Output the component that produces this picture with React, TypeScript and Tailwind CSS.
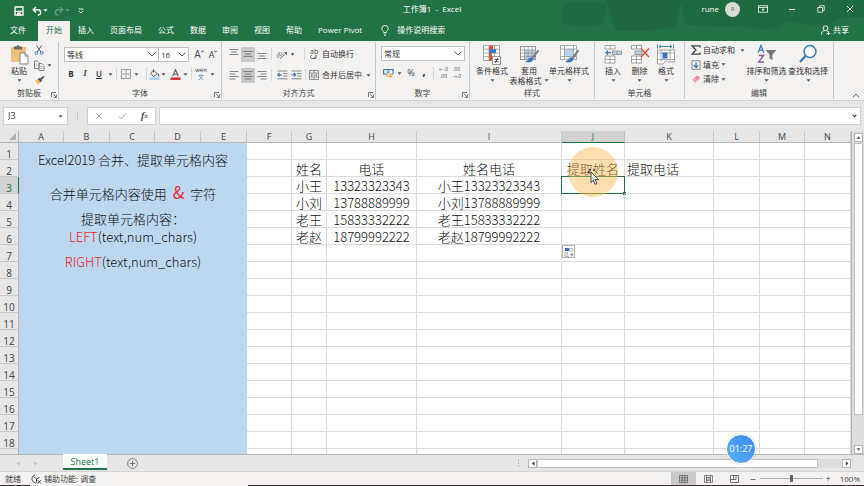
import React from "react";

const UI = "font-['Open_Sans','Noto_Sans_CJK_SC',sans-serif]";
const SHEET = "font-['Noto_Sans_CJK_SC',sans-serif] font-light";

function Caret({ className = "text-[#555]" }: { className?: string }) {
  return (
    <svg viewBox="0 0 5 3" className={`h-[3px] w-[5px] shrink-0 ${className}`} aria-hidden="true">
      <path d="M0.5 0.3h4L2.5 2.7z" fill="currentColor" />
    </svg>
  );
}

function Icon({
  w = 12,
  h = 12,
  children,
  className = "",
}: {
  w?: number;
  h?: number;
  children: React.ReactNode;
  className?: string;
}) {
  return (
    <svg
      width={w}
      height={h}
      viewBox={`0 0 ${w} ${h}`}
      fill="none"
      stroke="currentColor"
      strokeWidth="0.9"
      className={`shrink-0 ${className}`}
      aria-hidden="true"
    >
      {children}
    </svg>
  );
}

function Btn({
  label,
  children,
  className = "",
}: {
  label: string;
  children: React.ReactNode;
  className?: string;
}) {
  return (
    <button type="button" aria-label={label} className={`flex shrink-0 items-center justify-center ${className}`}>
      {children}
    </button>
  );
}

function CaretBtn({ label }: { label: string }) {
  return (
    <Btn label={label} className="h-4 w-2">
      <Caret />
    </Btn>
  );
}

function Sep({ className = "" }: { className?: string }) {
  return <span className={`h-3 w-px shrink-0 bg-[#d5d5d5] ${className}`} />;
}

function Drop({ label, value, className }: { label: string; value: string; className: string }) {
  return (
    <label className={`relative block h-[15px] shrink-0 border border-[#c0c0c0] bg-white ${className}`}>
      <select
        aria-label={label}
        defaultValue={value}
        className="block h-full w-full appearance-none bg-transparent pl-[2px] text-[8px] leading-[13px] text-[#333] outline-none"
      >
        <option>{value}</option>
      </select>
      <Icon w={8} h={5} className="pointer-events-none absolute right-[2px] top-1 text-[#444]">
        <path d="M0.5 0.5L4 4L7.5 0.5" />
      </Icon>
    </label>
  );
}

function Group({
  title,
  launcher = false,
  className,
  children,
}: {
  title: string;
  launcher?: boolean;
  className: string;
  children: React.ReactNode;
}) {
  return (
    <section aria-label={title} className={`flex shrink-0 flex-col border-r border-[#c8c8c8] ${className}`}>
      <div className="flex h-[45px]">{children}</div>
      <div className="flex h-[12px] items-center text-[8px] leading-[12px] text-[#444]">
        <span className="w-[9px]" />
        <span className="flex-1 text-center">{title}</span>
        <span className="flex w-[9px] justify-center pt-1">
          {launcher && (
            <Btn label={`${title}设置`}>
              <Icon w={6} h={6} className="text-[#666]">
                <path d="M0.5 5V0.5H5M2 2L5.2 5.2M5.4 2.6V5.4H2.6" />
              </Icon>
            </Btn>
          )}
        </span>
      </div>
    </section>
  );
}

function Big({
  icon,
  lines,
  className,
}: {
  icon: React.ReactNode;
  lines: string[];
  className: string;
}) {
  return (
    <button
      type="button"
      className={`flex shrink-0 flex-col items-center pt-[2px] text-[8px] leading-[9px] text-[#333] ${className}`}
    >
      {icon}
      <span className="mt-px whitespace-nowrap">{lines[0]}</span>
      <span className="flex h-[10px] items-center gap-[2px] whitespace-nowrap">
        {lines[1] && <span>{lines[1]}</span>}
        <Caret />
      </span>
    </button>
  );
}

function AlignIcon({ d }: { d: string }) {
  return (
    <Icon w={10} h={12} className="text-[#777]">
      <path d={d} />
    </Icon>
  );
}

function Brush() {
  return (
    <g stroke="none">
      <path d="M19 5.5L13 13l1.6 1.6L20 7z" fill="#777" />
      <path d="M12.6 13.2c-3 0-3 3.6-6.6 4.6 3.6 1.4 8 .4 8.6-3z" fill="#3b78b8" />
    </g>
  );
}

function FontGroup() {
  return (
    <Group title="字体" launcher className="w-[163px]">
      <div className="flex flex-col pl-[5px] pt-1">
        <div className="flex items-center">
          <Drop label="字体" value="等线" className="w-[95px]" />
          <Drop label="字号" value="16" className="-ml-px w-[31px]" />
          <Btn label="增大字号" className="ml-[3px] h-4 w-[14px] text-[10px] leading-none text-[#444]">
            A
            <Icon w={3} h={8}>
              <path d="M0.3 2.3L1.5 0.8L2.7 2.3" />
            </Icon>
          </Btn>
          <Btn label="减小字号" className="h-4 w-[14px] text-[9px] leading-none text-[#444]">
            A
            <Icon w={3} h={8}>
              <path d="M0.3 0.8L1.5 2.3L2.7 0.8" />
            </Icon>
          </Btn>
        </div>
        <div className="mt-[4px] flex items-center text-[8px] text-[#333]">
          <Btn label="加粗" className="h-4 w-[14px] font-bold">B</Btn>
          <Btn label="倾斜" className="h-4 w-[14px] font-['Liberation_Serif',serif] font-bold italic">I</Btn>
          <Btn label="下划线" className="h-4 w-[14px] font-semibold underline">U</Btn>
          <CaretBtn label="下划线样式" />
          <Sep className="mx-[2px]" />
          <Btn label="边框" className="h-4 w-[13px] text-[#999]">
            <Icon w={10} h={10}>
              <path d="M0.5 0.5h9v9h-9zM5 0.5v9M0.5 5h9" />
            </Icon>
          </Btn>
          <CaretBtn label="边框样式" />
          <Sep className="ml-[6px] mr-[2px]" />
          <Btn label="填充颜色" className="h-4 w-[10px] text-[#555]">
            <Icon w={11} h={11}>
              <path d="M4.5 1L8.3 4.7L4.6 7.6L1.5 4.6zM4.5 0.3v3.2" />
              <path d="M8.6 4.5c1.3 1.2 1.5 2 .9 3" stroke="#3b78b8" strokeWidth="1.3" />
              <path d="M0.5 9.7h10" stroke="#a9cdea" strokeWidth="2.4" />
            </Icon>
          </Btn>
          <CaretBtn label="选择填充颜色" />
          <Btn label="字体颜色" className="ml-[2px] h-4 w-[12px] text-[#555]">
            <Icon w={11} h={11}>
              <path d="M2.6 7.4L5.5 0.8L8.4 7.4M3.6 5.2h3.8" strokeWidth="1.1" />
              <path d="M0.5 9.7h10" stroke="#d9262c" strokeWidth="2.4" />
            </Icon>
          </Btn>
          <CaretBtn label="选择字体颜色" />
          <Sep className="mx-[2px]" />
          <Btn label="拼音指南" className="h-4 w-[14px] flex-col text-[6px] leading-[7px]">
            <span>wén</span>
            <span className="text-[#3b78b8]">文</span>
          </Btn>
          <CaretBtn label="拼音选项" />
        </div>
      </div>
    </Group>
  );
}

function AlignGroup() {
  const cell = "h-[15px] w-[14px]";
  return (
    <Group title="对齐方式" launcher className="w-[154px]">
      <div className="flex flex-col gap-[5px] pl-[5px] pt-1">
        <div className="flex items-center">
          <Btn label="顶端对齐" className={cell}>
            <AlignIcon d="M0.5 1.5h9M2 4h6M0.5 6.5h9" />
          </Btn>
          <Btn label="垂直居中" className={`${cell} bg-[#c9c9c9]`}>
            <AlignIcon d="M0.5 3.5h9M2 6h6M0.5 8.5h9" />
          </Btn>
          <Btn label="底端对齐" className={cell}>
            <AlignIcon d="M0.5 5.5h9M2 8h6M0.5 10.5h9" />
          </Btn>
          <Sep className="ml-[2px] mr-1" />
          <Btn label="方向" className="h-4 w-[12px] text-[#555]">
            <Icon w={12} h={12}>
              <text x="0" y="8" fontSize="6" fill="currentColor" stroke="none" transform="rotate(-40 4 7)">
                ab
              </text>
              <path d="M4 10.5L10.5 4.5M8.2 4.5h2.4v2.4" />
            </Icon>
          </Btn>
          <CaretBtn label="方向选项" />
          <Sep className="ml-[8px] mr-1" />
          <button type="button" className="flex items-center gap-[3px] text-[8px] leading-[12px] text-[#333]">
            <Icon w={10} h={12} className="text-[#555]">
              <text x="1" y="6" fontSize="7" fill="currentColor" stroke="none">
                ab
              </text>
              <path d="M3 7.5c-2 0-2 3 0 3h3.5M7 7v3.5L5.2 9" />
            </Icon>
            <span>自动换行</span>
          </button>
        </div>
        <div className="flex items-center">
          <Btn label="左对齐" className={cell}>
            <AlignIcon d="M0.5 2.5h9M0.5 5h6M0.5 7.5h9M0.5 10h6" />
          </Btn>
          <Btn label="居中" className={`${cell} bg-[#c9c9c9]`}>
            <AlignIcon d="M0.5 2.5h9M2 5h6M0.5 7.5h9M2 10h6" />
          </Btn>
          <Btn label="右对齐" className={cell}>
            <AlignIcon d="M0.5 2.5h9M3.5 5h6M0.5 7.5h9M3.5 10h6" />
          </Btn>
          <Sep className="ml-[2px] mr-[3px]" />
          <Btn label="减少缩进量" className={cell}>
            <Icon w={11} h={10} className="text-[#777]">
              <path d="M0.5 1h10M6 3.5h4.5M6 6h4.5M0.5 8.8h10" />
              <path d="M5 4.8H0.8M2.5 3L0.7 4.8L2.5 6.6" stroke="#3b78b8" strokeWidth="1.2" />
            </Icon>
          </Btn>
          <Btn label="增加缩进量" className={cell}>
            <Icon w={11} h={10} className="text-[#777]">
              <path d="M0.5 1h10M6 3.5h4.5M6 6h4.5M0.5 8.8h10" />
              <path d="M0.5 4.8H4.6M2.9 3L4.7 4.8L2.9 6.6" stroke="#3b78b8" strokeWidth="1.2" />
            </Icon>
          </Btn>
          <Sep className="ml-[2px] mr-[3px]" />
          <button type="button" className="flex items-center gap-[3px] text-[8px] leading-[12px] text-[#333]">
            <Icon w={10} h={10} className="text-[#777]">
              <path
                d="M0.5 0.5h9v9h-9zM0.5 3h9M0.5 7h9M5 0.5v2.5M5 7v2.5M2 5h6M3 4.2L2 5L3 5.8M7 4.2L8 5L7 5.8"
                strokeWidth="0.8"
              />
            </Icon>
            <span>合并后居中</span>
          </button>
          <Btn label="合并选项" className="ml-[2px] h-4 w-2">
            <Caret />
          </Btn>
        </div>
      </div>
    </Group>
  );
}

function NumberGroup() {
  return (
    <Group title="数字" launcher className="w-[94px]">
      <div className="flex flex-col gap-[4px] pl-[5px] pt-1">
        <Drop label="数字格式" value="常规" className="w-[84px]" />
        <div className="flex items-center text-[9px] text-[#444]">
          <Btn label="会计数字格式" className="h-4 w-[14px]">
            <Icon w={11} h={10}>
              <path d="M0.6 1.5h9.5v4.5M0.6 1.5v4.5h4" stroke="#3b78b8" strokeWidth="1.2" />
              <circle cx="5.2" cy="3.7" r="1.2" stroke="#3b78b8" />
              <path d="M6 6.5h4M6 8.5h3M3.5 8h2" stroke="#e3a548" strokeWidth="1.5" />
            </Icon>
          </Btn>
          <CaretBtn label="货币选项" />
          <Btn label="百分比样式" className="ml-[2px] h-4 w-[12px]">%</Btn>
          <Btn label="千位分隔样式" className="h-4 w-[14px] pb-1 text-[13px] font-bold">,</Btn>
          <Sep className="ml-[2px] mr-1" />
          <Btn label="增加小数位数" className="h-4 w-[11px] flex-col text-[5px] leading-[7px]">
            <span>←.0</span>
            <span>.00</span>
          </Btn>
          <Btn label="减少小数位数" className="ml-[2px] h-4 w-[11px] flex-col text-[5px] leading-[7px]">
            <span>.00</span>
            <span>→.0</span>
          </Btn>
        </div>
      </div>
    </Group>
  );
}

function Ribbon() {
  return (
    <div className="flex h-[60px] items-start border-b border-[#d2d2d2] bg-[#f3f2f1] pt-[1px]">
      <Group title="剪贴板" launcher className="w-[59px]">
        <Big
          lines={["粘贴"]}
          className="ml-2 w-[22px]"
          icon={
            <Icon w={20} h={21}>
              <path d="M2 3h15v15H2z" fill="#ecc078" stroke="none" />
              <path d="M5 2.5h2.500c0-1.800 3-1.800 3 0h2.500v3H5z" fill="#666" stroke="none" />
              <path d="M11 9h5l3 3v8h-8z" fill="#fff" stroke="#777" />
              <path d="M16 9v3h3" stroke="#777" />
            </Icon>
          }
        />
        <div className="flex flex-col pl-[3px] pt-[1px]">
          <Btn label="剪切" className="h-[14px] w-[12px]">
            <Icon w={10} h={10}>
              <path d="M2.5 0.5L6.8 7M7.5 0.5L3.2 7" stroke="#555" />
              <circle cx="2.3" cy="8" r="1.4" stroke="#3b78b8" />
              <circle cx="7.7" cy="8" r="1.4" stroke="#3b78b8" />
            </Icon>
          </Btn>
          <div className="flex items-center">
            <Btn label="复制" className="h-[15px] w-[12px] text-[#777]">
              <Icon w={11} h={11}>
                <path d="M0.5 1h3l1.5 1.5v6h-4.5zM5 3.5h3l2 2v5H5z" fill="#fff" />
                <path d="M1.5 4h2M1.5 6h2M6.3 6.5h2.5M6.3 8.5h2.5" strokeWidth="0.6" />
              </Icon>
            </Btn>
            <CaretBtn label="复制选项" />
          </div>
          <Btn label="格式刷" className="h-[14px] w-[12px]">
            <Icon w={11} h={11}>
              <path d="M1 6l3-2.5 3 3L4.5 9.5z" fill="#e9b767" stroke="none" />
              <path d="M4.5 3.5l3 3M6.5 4.5L9.8 1.5" stroke="#555" strokeWidth="1.8" />
            </Icon>
          </Btn>
        </div>
      </Group>

      <FontGroup />
      <AlignGroup />
      <NumberGroup />

      <Group title="样式" className="w-[125px]">
        <Big
          lines={["条件格式"]}
          className="ml-1 w-[36px]"
          icon={
            <Icon w={20} h={21} className="text-[#8a8a8a]">
              <path
                d="M1.5 1.5h16v15h-16zM1.5 5.2h16M1.5 9h16M1.5 12.7h16M7 1.5v15M12.5 1.5v15"
                fill="#fff"
                strokeWidth="0.7"
              />
              <path d="M7 1.5h4v3.5H7zM7 9h3v7.5H7z" fill="#d2553a" stroke="none" />
              <path d="M7 5.2h7V9H7z" fill="#3b78b8" stroke="none" />
              <path d="M10.5 12.5h8v8h-8z" fill="#fff" />
              <path d="M12.5 15.5h4M12.5 17.5h4M15.8 14l-2.6 5" stroke="#444" />
            </Icon>
          }
        />
        <Big
          lines={["套用", "表格格式"]}
          className="w-[38px]"
          icon={
            <Icon w={21} h={21} className="text-[#8a8a8a]">
              <path d="M1.5 2.5h15v13h-15z" fill="#fff" strokeWidth="0.7" />
              <path d="M5.5 6h11v9.5h-11z" fill="#b9d3ec" stroke="none" />
              <path
                d="M1.5 2.5h15v13h-15zM1.5 6h15M1.5 9.2h15M1.5 12.4h15M5.5 2.5v13M9.2 2.5v13M13 2.5v13"
                strokeWidth="0.7"
              />
              <Brush />
            </Icon>
          }
        />
        <Big
          lines={["单元格样式"]}
          className="w-[42px]"
          icon={
            <Icon w={21} h={21} className="text-[#8a8a8a]">
              <path d="M1.5 1.5h16v14h-16z" fill="#fff" strokeWidth="0.7" />
              <path d="M5.5 5h9v7.5h-9z" fill="#b9d3ec" stroke="none" />
              <path d="M1.5 5h16M1.5 12.5h16M5.5 1.5v14M14.5 1.5v14" strokeWidth="0.7" />
              <Brush />
            </Icon>
          }
        />
      </Group>

      <Group title="单元格" className="w-[90px]">
        <Big
          lines={["插入"]}
          className="ml-[5px] w-[26px]"
          icon={
            <Icon w={20} h={21} className="text-[#8a8a8a]">
              <path d="M2 1.5h10v3.5H2zM7 1.5v3.5M2 12h10v7H2zM7 12v7M2 15.5h10" fill="#fff" strokeWidth="0.8" />
              <path d="M9.5 7h9v3.5h-9zM14 7v3.5" fill="#b9d3ec" strokeWidth="0.8" />
              <path d="M8 8.7H3M5 6.7L3 8.7l2 2" stroke="#3b78b8" strokeWidth="1.3" />
            </Icon>
          }
        />
        <Big
          lines={["删除"]}
          className="w-[27px]"
          icon={
            <Icon w={20} h={21} className="text-[#8a8a8a]">
              <path
                d="M1.5 1.5h10v3.5h-10zM6.5 1.5v3.5M1.5 12h10v7h-10zM6.5 12v7M1.5 15.5h10"
                fill="#fff"
                strokeWidth="0.8"
              />
              <path d="M5 7h7v3.5H5z" fill="#b9d3ec" strokeWidth="0.8" />
              <path d="M11 4.5l8 8.5M19 4.5L11 13" stroke="#d2553a" strokeWidth="1.5" />
            </Icon>
          }
        />
        <Big
          lines={["格式"]}
          className="w-[26px]"
          icon={
            <Icon w={20} h={21} className="text-[#8a8a8a]">
              <path
                d="M1.5 0.5v4M17.5 0.5v4M3 2.5h13M5 1L3 2.5L5 4M14 1l2 1.5L14 4"
                stroke="#3b78b8"
                strokeWidth="0.9"
              />
              <path d="M1.5 6h17v12h-6l-2-1.5L7 20H1.5z" fill="#fff" strokeWidth="0.8" />
              <path d="M1.5 9h17M1.5 15.5h17M5 6v12M14 6v12" strokeWidth="0.7" />
              <path d="M6.5 8.5h5v6h-5z" fill="#3b78b8" stroke="none" />
            </Icon>
          }
        />
      </Group>

      <Group title="编辑" className="w-[149px]">
        <div className="flex w-[61px] flex-col pl-[6px] pt-[1px] text-[8px] leading-[14px] text-[#333]">
          <button type="button" className="flex h-[14px] items-center gap-[2px] whitespace-nowrap">
            <Icon w={10} h={10} className="text-[#444]">
              <path d="M9 2.5V0.8H1L5 5L1 9.2h8V7.5" strokeWidth="1.3" />
            </Icon>
            <span>自动求和</span>
            <span className="ml-[3px]">
              <Caret />
            </span>
          </button>
          <button type="button" className="flex h-[15px] items-center gap-[2px]">
            <Icon w={10} h={10} className="text-[#777]">
              <path d="M1 0.8h8v8.5H1z" fill="#fff" />
              <path d="M5 2v5.5M2.8 5.3L5 7.5l2.2-2.2" stroke="#3b78b8" strokeWidth="1.3" />
            </Icon>
            <span>填充</span>
            <Caret />
          </button>
          <button type="button" className="flex h-[14px] items-center gap-[2px]">
            <Icon w={10} h={10}>
              <path d="M1.5 6L6 1.2l3 2.8L4.5 8.8z" fill="#e88ba0" stroke="none" />
              <path d="M3 4.5l3 2.8" stroke="#fff" />
            </Icon>
            <span>清除</span>
            <Caret />
          </button>
        </div>
        <Big
          lines={["排序和筛选"]}
          className="w-[41px]"
          icon={
            <Icon w={20} h={21}>
              <path d="M1.2 8.5L4 1.5L6.8 8.5M2.2 6.2h3.6" stroke="#3b78b8" strokeWidth="1.3" />
              <path d="M1.7 11.5h4.8L1.5 18h5.3" stroke="#8d5bb0" strokeWidth="1.3" />
              <path d="M8.5 6h11l-4 4.5V16l-3-1.5v-4z" fill="#777" stroke="none" />
            </Icon>
          }
        />
        <Big
          lines={["查找和选择"]}
          className="w-[42px]"
          icon={
            <Icon w={20} h={21}>
              <circle cx="12" cy="7.5" r="5.9" fill="#fff" stroke="#3b78b8" strokeWidth="1.5" />
              <path d="M8 11.5L2 18" stroke="#3b78b8" strokeWidth="2.2" />
            </Icon>
          }
        />
      </Group>
      <div className="flex flex-1 justify-end self-end pb-[2px] pr-1">
        <Btn label="折叠功能区">
          <Icon w={8} h={5} className="text-[#555]">
            <path d="M0.8 4.2L4 1L7.2 4.2" />
          </Icon>
        </Btn>
      </div>
    </div>
  );
}

const TABS = ["插入", "页面布局", "公式", "数据", "审阅", "视图", "帮助", "Power Pivot"];

function TitleBar() {
  return (
    <header className="relative bg-[#217346] text-[8px] text-white">
      <svg className="absolute right-0 top-0 h-[41px] w-[314px]" viewBox="0 0 314 41" aria-hidden="true">
        <path d="M13 4q20-6 44 0l-3 20q-22 6-42-1z" fill="#1f683f" opacity="0.6" />
        <path d="M56 0h76l-6 26q-30 7-60 4z" fill="#1d633c" opacity="0.6" />
        <path d="M132 0h182v17q-26-2-38 10l-42-6-2 6q-20 5-40-1-34 2-57-2z" fill="#1e663e" opacity="0.7" />
      </svg>
      <div className="relative grid h-[21px] grid-cols-[1fr_auto_1fr] items-center">
        <div className="flex items-center pl-3">
          <Btn label="保存" className="h-4 w-[13px]">
            <Icon w={10} h={10}>
              <path d="M1 1h8v8H1zM1 5.3h8" strokeWidth="1.3" />
              <path d="M3 6.5h4v3H3z" fill="#fff" stroke="none" />
            </Icon>
          </Btn>
          <Btn label="撤消" className="ml-[6px] h-4 w-3">
            <Icon w={10} h={10}>
              <path d="M4 1L1.3 3.7L4 6.4M1.5 3.7H6c3.5 0 3.5 5 0 5.3" strokeWidth="1.4" />
            </Icon>
          </Btn>
          <Caret className="text-white" />
          <Btn label="恢复" className="ml-[5px] h-4 w-3 opacity-30">
            <Icon w={10} h={10}>
              <path d="M6 1l2.7 2.7L6 6.4M8.5 3.7H4c-3.5 0-3.500 5 0 5.3" strokeWidth="1.4" />
            </Icon>
          </Btn>
          <Caret className="text-white opacity-30" />
          <Btn label="自定义快速访问工具栏" className="ml-[5px] h-4 w-3">
            <Icon w={6} h={6}>
              <path d="M0.5 1h5M1 3l2 2l2-2" />
            </Icon>
          </Btn>
        </div>
        <h1 className="whitespace-pre pb-[3px]">{"工作簿1  -  Excel"}</h1>
        <div className="flex items-center justify-end pb-[3px]">
          <span>rune</span>
          <span className="ml-[6px] mr-2 flex h-[15px] w-[15px] items-center justify-center rounded-full bg-[#d8dcd8] text-[6px] text-[#666]">
            R
          </span>
          <Btn label="功能区显示选项" className="h-4 w-[29px]">
            <Icon w={10} h={8}>
              <path d="M0.5 0.7h9v6.6h-9zM0.5 2.5h9M5 6.3V3.8M3.7 5L5 3.7L6.3 5" strokeWidth="0.8" />
            </Icon>
          </Btn>
          <Btn label="最小化" className="h-4 w-[29px]">
            <Icon w={8} h={8}>
              <path d="M1 4.5h6" />
            </Icon>
          </Btn>
          <Btn label="向下还原" className="h-4 w-[29px]">
            <Icon w={8} h={8}>
              <path d="M0.8 2.5h4.7v4.7H0.8zM2.5 2.5V0.8h4.7v4.7H5.5" strokeWidth="0.8" />
            </Icon>
          </Btn>
          <Btn label="关闭" className="h-4 w-[29px]">
            <Icon w={8} h={8}>
              <path d="M1 1l6 6M7 1L1 7" />
            </Icon>
          </Btn>
        </div>
      </div>
      <nav className="relative flex h-5 items-stretch pl-[2px] leading-[18px]">
        <button type="button" className="mr-1 px-2 pb-[2px]">文件</button>
        <button type="button" className="bg-[#f3f2f1] px-2 pb-[2px] text-[#217346]">开始</button>
        {TABS.map((t) => (
          <button type="button" key={t} className="whitespace-nowrap px-2 pb-[2px]">
            {t}
          </button>
        ))}
        <button type="button" className="ml-[11px] flex items-center gap-[8px] whitespace-nowrap pb-[2px]">
          <Icon w={8} h={11}>
            <path
              d="M2.7 7.5C2.7 6 0.8 5.5 0.8 3.6a3.2 3.2 0 016.4 0c0 1.9-1.9 2.4-1.9 3.9zM2.8 9h2.4M3.2 10.4h1.6"
              strokeWidth="0.8"
            />
          </Icon>
          <span>操作说明搜索</span>
        </button>
        <button type="button" className="ml-auto mr-[15px] flex items-center gap-[2px] pb-[2px]">
          <Icon w={10} h={10}>
            <circle cx="4.5" cy="3.2" r="2.4" />
            <path d="M0.5 9.5c0-2.5 1.5-4 3.5-4M5.5 5.5c1 .3 1.6.8 2 1.5M5.5 8.5h4M7.5 6.500v3.5" />
          </Icon>
          <span>共享</span>
        </button>
      </nav>
    </header>
  );
}

function FormulaBar() {
  return (
    <div className="flex h-[30px] items-center bg-[#e6e6e6] px-[3px] text-[#444]">
      <label className="flex h-[18px] w-[65px] items-center border border-[#d0d0d0] bg-white pr-1">
        <input aria-label="名称框" defaultValue="J3" className="w-0 flex-1 bg-transparent pl-1 text-[9px] outline-none" />
        <Caret />
      </label>
      <Icon w={3} h={8} className="ml-2 mr-2 text-[#999]">
        <path d="M1.5 0.5v1.2M1.5 3.4v1.2M1.5 6.3v1.2" />
      </Icon>
      <div className="flex h-[18px] w-[69px] items-center justify-around border border-[#d0d0d0] bg-white text-[#aaa]">
        <Btn label="取消">
          <Icon w={8} h={8}>
            <path d="M1 1l6 6M7 1L1 7" />
          </Icon>
        </Btn>
        <Btn label="输入">
          <Icon w={9} h={8}>
            <path d="M0.8 4.5L3.3 7L8.2 1" />
          </Icon>
        </Btn>
        <Btn label="插入函数" className="font-['Liberation_Serif',serif] text-[10px] font-bold italic leading-none text-[#444]">
          f<span className="text-[7px]">x</span>
        </Btn>
      </div>
      <label className="ml-[3px] flex h-[18px] flex-1 items-center border border-[#d0d0d0] bg-white pr-[3px]">
        <input aria-label="编辑栏" className="w-0 flex-1 bg-transparent pl-1 text-[8px] outline-none" />
        <Icon w={5} h={4} className="text-[#444]">
          <path d="M0.7 0.8L2.5 2.7L4.3 0.8" strokeWidth="1.2" />
        </Icon>
      </label>
    </div>
  );
}

const COLS = ["A", "B", "C", "D", "E", "F", "G", "H", "I", "J", "K", "L", "M", "N"];
const REST = ["F", "G", "H", "I", "J", "K", "L", "M", "N"];

const CELLS: Record<string, string> = {
  G2: "姓名", H2: "电话", I2: "姓名电话", J2: "提取姓名", K2: "提取电话",
  G3: "小王", H3: "13323323343", I3: "小王13323323343",
  G4: "小刘", H4: "13788889999", I4: "小刘13788889999",
  G5: "老王", H5: "15833332222", I5: "老王15833332222",
  G6: "老赵", H6: "18799992222", I6: "老赵18799992222",
};

function Pointer() {
  return (
    <>
      <span className="absolute -inset-px border border-[#217346]" />
      <span className="absolute -bottom-[2px] -right-[2px] h-[3px] w-[3px] bg-[#217346]" />
      <span className="absolute -top-[30px] left-1/2 z-10 h-[50px] w-[50px] -translate-x-1/2 rounded-full bg-[#f7b84b]/45" />
      <svg className="absolute -top-[9px] left-1/2 z-20 h-[18px] w-[14px] -translate-x-1/2" viewBox="0 0 14 18" aria-hidden="true">
        <path d="M5 4v10.500l2.400-2.200 1.700 4 1.800-.8-1.700-3.900h3.300z" fill="#fff" stroke="#333" strokeWidth="0.900" />
        <path d="M1.500 4.500l2-.5M3.500 0.800l1 1.700M8.500 1l-1 1.700" stroke="#222" strokeWidth="1.400" />
      </svg>
    </>
  );
}

function PasteOptions() {
  return (
    <button
      type="button"
      aria-label="自动填充选项"
      className="absolute left-0 top-0 z-10 flex h-[13px] w-[13px] items-center justify-center border border-[#b5b5b5] bg-white"
    >
      <Icon w={10} h={10} className="text-[#999]">
        <path d="M1 1h4v3H1z" fill="#3b6fc0" stroke="none" />
        <path d="M5.5 1.5h3.5v2.5H5.5zM1 5v4.5h3.5M1 7h3.500M3 5v4.500" strokeWidth="0.6" />
        <path d="M7.8 6v3.5M6 7.700h3.5" stroke="#777" strokeWidth="0.8" />
      </Icon>
    </button>
  );
}

function Notes() {
  return (
    <div className="flex h-full flex-col pt-2 text-center text-[13px] leading-[18px] text-[#111]">
      <p>Excel2019 合并、提取单元格内容</p>
      <p className="mt-[16px]">
        合并单元格内容使用
        <span className="mx-[6px] text-[17px] font-normal leading-[14px] text-[#e8262c]">&amp;</span>
        字符
      </p>
      <p className="mt-[7px]">提取单元格内容：</p>
      <p>
        <span className="text-[#e8262c]">LEFT</span>(text,num_chars)
      </p>
      <p className="mt-[7px]">
        <span className="text-[#e8262c]">RIGHT</span>(text,num_chars)
      </p>
    </div>
  );
}

function Sheet() {
  const rows = Array.from({ length: 18 }, (_, i) => i + 1);
  return (
    <div className="flex flex-1 bg-[#e6e6e6]">
      <div className="min-w-0 flex-1 bg-white">
        <table className="w-full table-fixed border-separate border-spacing-0">
          <colgroup>
            <col className="w-[19px]" />
            <col className="w-[45px]" />
            <col className="w-[46px]" />
            <col className="w-[45px]" />
            <col className="w-[46px]" />
            <col className="w-[46px]" />
            <col className="w-[45px]" />
            <col className="w-[35px]" />
            <col className="w-[90px]" />
            <col className="w-[145px]" />
            <col className="w-[63px]" />
            <col className="w-[89px]" />
            <col className="w-[46px]" />
            <col className="w-[45px]" />
            <col className="w-[46px]" />
          </colgroup>
          <thead className="text-[9px] leading-[11px] text-[#444]">
            <tr>
              <th aria-label="全选" className="h-3 border-b border-r border-[#b5b5b5] bg-[#e6e6e6] p-0">
                <svg viewBox="0 0 7 7" className="ml-auto mr-[2px] h-[7px] w-[7px]" aria-hidden="true">
                  <path d="M7 0v7H0z" fill="#b0b0b0" />
                </svg>
              </th>
              {COLS.map((c) => (
                <th
                  key={c}
                  scope="col"
                  className={
                    c === "J"
                      ? "h-3 border-b border-r border-b-[#217346] border-r-[#c0c0c0] bg-[#d2d2d2] p-0 font-normal text-[#217346]"
                      : "h-3 border-b border-r border-b-[#b5b5b5] border-r-[#c8c8c8] bg-[#e6e6e6] p-0 font-normal"
                  }
                >
                  {c}
                </th>
              ))}
            </tr>
          </thead>
          <tbody>
            {rows.map((r) => (
              <tr key={r} className="h-[17px]">
                <th
                  scope="row"
                  className={
                    r === 3
                      ? "border-b border-r border-b-[#c8c8c8] border-r-[#217346] bg-[#d2d2d2] p-0 align-bottom text-[10px] font-normal leading-[9px] text-[#217346]"
                      : "border-b border-r border-b-[#c8c8c8] border-r-[#b5b5b5] bg-[#e6e6e6] p-0 align-bottom text-[10px] font-normal leading-[9px] text-[#444]"
                  }
                >
                  {r}
                </th>
                {r === 1 && (
                  <td rowSpan={19} colSpan={5} className={`bg-[#bdd7ee] p-0 align-top ${SHEET}`}>
                    <Notes />
                  </td>
                )}
                {REST.map((c) => (
                  <td
                    key={c}
                    className={`relative whitespace-nowrap border-b border-r border-[#dadada] p-0 align-bottom text-[13px] leading-[14px] text-[#111] ${SHEET} ${
                      c === "K" ? "pl-[2px] text-left" : "text-center"
                    }`}
                  >
                    {CELLS[c + r]}
                    {c === "J" && r === 3 && <Pointer />}
                    {c === "J" && r === 7 && <PasteOptions />}
                  </td>
                ))}
              </tr>
            ))}
            <tr className="h-[5px]">
              <td className="border-r border-[#b5b5b5] bg-[#e6e6e6] p-0" />
              {REST.map((c) => (
                <td key={c} className="border-r border-[#dadada] p-0" />
              ))}
            </tr>
          </tbody>
        </table>
      </div>
      <div className="flex w-[13px] shrink-0 flex-col items-center border-l border-[#b5b5b5] bg-[#dcdcdc] pt-[2px]">
        <Btn label="向上滚动" className="h-[9px] w-[9px] border border-[#b5b5b5] bg-white">
          <Icon w={5} h={3} className="text-[#555]">
            <path d="M0.5 2.7h4L2.5 0.3z" fill="currentColor" stroke="none" />
          </Icon>
        </Btn>
        <div className="mt-px w-[9px] grow-[9] border border-[#c0c0c0] bg-white" />
        <div className="grow" />
        <Btn label="向下滚动" className="h-[9px] w-[9px] border border-[#b5b5b5] bg-white">
          <Caret />
        </Btn>
      </div>
    </div>
  );
}

function SheetTabs() {
  return (
    <div className="flex h-[17px] items-center border-t border-[#b5b5b5] bg-[#e6e6e6] text-[#bbb]">
      <Btn label="上一个工作表" className="ml-3 w-3">
        <Icon w={4} h={5}>
          <path d="M3.5 0.5v4L0.8 2.5z" fill="currentColor" stroke="none" />
        </Icon>
      </Btn>
      <Btn label="下一个工作表" className="ml-[6px] w-3">
        <Icon w={4} h={5}>
          <path d="M0.5 0.5v4L3.2 2.5z" fill="currentColor" stroke="none" />
        </Icon>
      </Btn>
      <button
        type="button"
        className="-mt-px ml-[21px] h-4 w-[44px] self-start border-b-2 border-[#217346] bg-white pt-px text-[9px] leading-[13px] text-[#217346]"
      >
        Sheet1
      </button>
      <Btn label="新工作表" className="ml-5 text-[#666]">
        <Icon w={11} h={11}>
          <circle cx="5.5" cy="5.5" r="4.9" strokeWidth="0.8" />
          <path d="M5.5 2.8v5.4M2.8 5.5h5.4" />
        </Icon>
      </Btn>
      <Icon w={3} h={8} className="ml-auto mr-2 text-[#999]">
        <path d="M1.5 0.5v1.2M1.5 3.4v1.2M1.5 6.3v1.2" />
      </Icon>
      <div className="mr-[13px] flex h-[9px] w-[323px] bg-[#dcdcdc]">
        <Btn label="向左滚动" className="h-[9px] w-[9px] border border-[#b5b5b5] bg-white">
          <Icon w={4} h={5} className="text-[#444]">
            <path d="M3.5 0.3v4.4L0.8 2.5z" fill="currentColor" stroke="none" />
          </Icon>
        </Btn>
        <div className="w-[281px] border border-[#c0c0c0] bg-white" />
        <Btn label="向右滚动" className="ml-auto h-[9px] w-[9px] border border-[#b5b5b5] bg-white">
          <Icon w={4} h={5} className="text-[#444]">
            <path d="M0.7 0.3v4.4L3.4 2.5z" fill="currentColor" stroke="none" />
          </Icon>
        </Btn>
      </div>
    </div>
  );
}

function StatusBar() {
  return (
    <footer>
      <div className="flex h-[14px] items-center border-t border-[#d5d5d5] bg-[#f3f2f1] text-[8px] leading-[12px] text-[#444]">
        <span className="ml-[5px]">就绪</span>
        <button type="button" className="ml-[10px] flex items-center gap-[2px]">
          <Icon w={11} h={10} className="text-[#444]">
            <path d="M4 8.8A4 4 0 014 1M2.5 2.5l3 2.5v3l-1 1.5M5.5 5l3-1.5M6.5 6l3.5 3.5M10 6L6.5 9.5" />
          </Icon>
          <span>辅助功能: 调查</span>
        </button>
        <Btn label="普通" className="ml-auto h-[13px] w-[25px] bg-[#c9c9c9] text-[#555]">
          <Icon w={9} h={8}>
            <path d="M0.5 0.5h8v7h-8zM0.5 2.8h8M0.5 5.2h8M3.2 0.5v7M5.8 0.5v7" strokeWidth="0.7" />
          </Icon>
        </Btn>
        <Btn label="页面布局" className="h-[13px] w-[26px] text-[#555]">
          <Icon w={9} h={8}>
            <path d="M0.5 0.5h8v7h-8zM2.5 0.5v7M6.5 0.5v7M2.5 2.5h4M2.5 4h4M2.5 5.5h4" strokeWidth="0.7" />
          </Icon>
        </Btn>
        <Btn label="分页预览" className="h-[13px] w-[25px] text-[#555]">
          <Icon w={9} h={8}>
            <path d="M0.5 0.5h8v7h-8zM3.5 0.5v4M6 0.5v4M0.5 4.5h5.5" strokeWidth="0.8" />
          </Icon>
        </Btn>
        <Btn label="缩小" className="ml-[2px] w-[9px] text-[10px]">−</Btn>
        <input
          type="range"
          aria-label="缩放"
          defaultValue={50}
          className="mx-[2px] h-2 w-[63px] appearance-none bg-[linear-gradient(#a8a8a8,#a8a8a8)] bg-[length:100%_1px] bg-center bg-no-repeat [&::-webkit-slider-thumb]:h-[7px] [&::-webkit-slider-thumb]:w-[3px] [&::-webkit-slider-thumb]:appearance-none [&::-webkit-slider-thumb]:bg-[#666]"
        />
        <Btn label="放大" className="w-[7px] text-[9px]">+</Btn>
        <span className="ml-2 mr-1">100%</span>
      </div>
      <div className="flex h-px bg-[#3a3436]">
        <span className="ml-[30px] w-[218px] bg-[#f3f2f1]" />
      </div>
    </footer>
  );
}

export default function App() {
  return (
    <main className={`relative flex min-h-screen flex-col bg-[#e6e6e6] ${UI}`}>
      <TitleBar />
      <Ribbon />
      <FormulaBar />
      <Sheet />
      <SheetTabs />
      <StatusBar />
      <div className="absolute bottom-[22px] right-[108px] z-20 flex h-[30px] w-[30px] items-center justify-center rounded-full border border-white bg-linear-to-tr from-[#5cb4f8] to-[#3c86ee] text-[9px] text-white shadow-[0_0_2px_#bbb]">
        01:27
      </div>
    </main>
  );
}
